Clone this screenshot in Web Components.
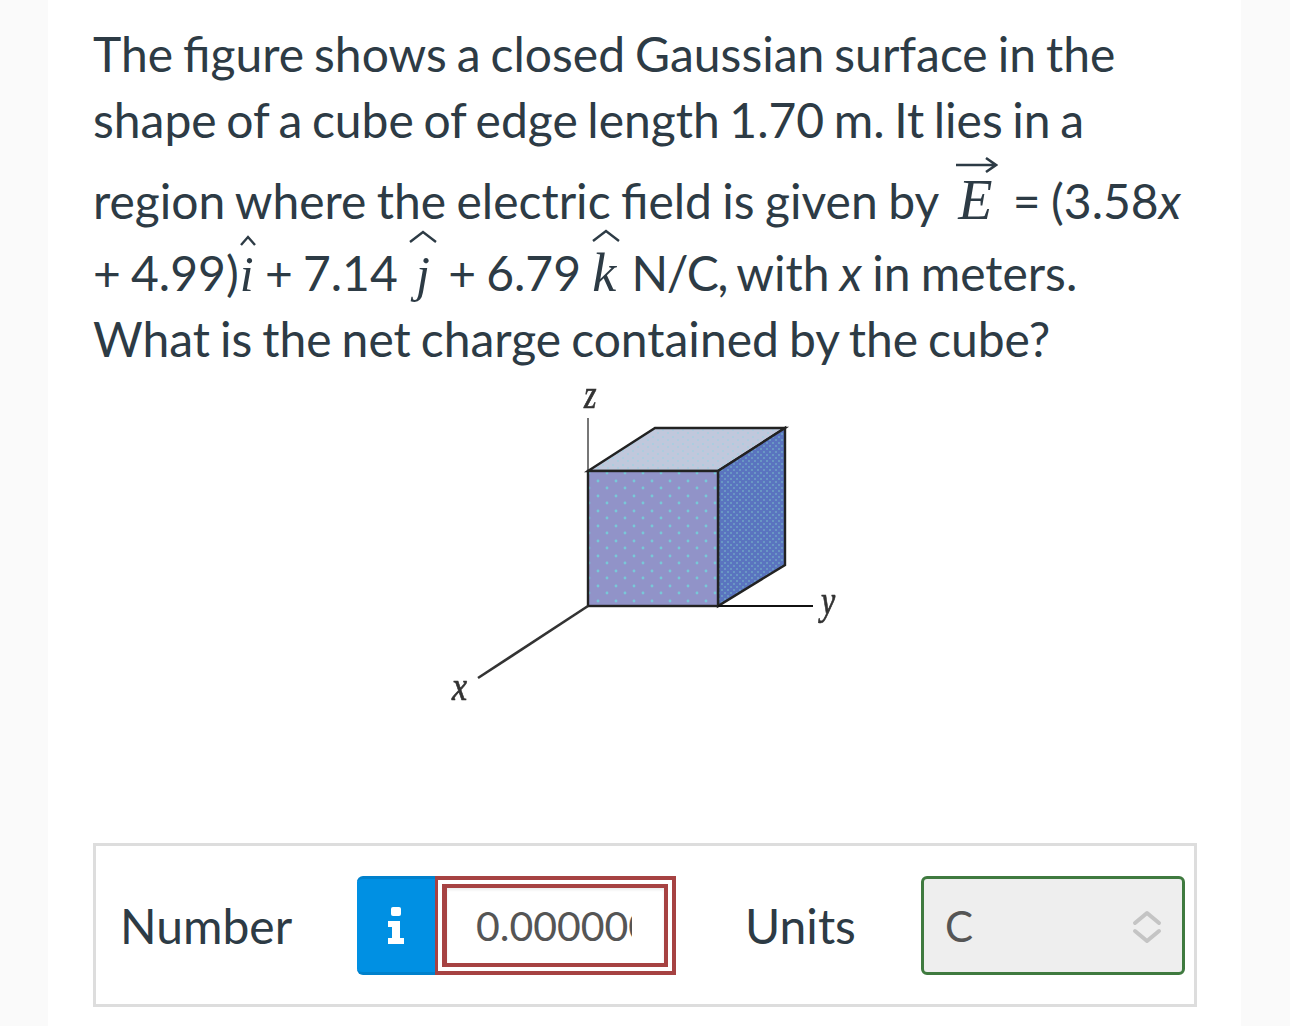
<!DOCTYPE html>
<html lang="en"><head><meta charset="utf-8"><title>Gaussian cube</title>
<style>html,body{margin:0;padding:0;background:#fafafa;height:100%;overflow:hidden}</style></head>
<body><q-page>
<q-text>
<q-line style="--h:66px;--ws:-2.3px">The figure shows a closed Gaussian surface in the</q-line>
<q-line style="--h:66px;--ws:-2.7px">shape of a cube of edge length 1.70 m. It lies in a</q-line>
<q-line style="--h:81px;--pt:14px;--ws:-1.9px">region where the electric field is given by <q-math mark="arrow" style="--w:54px;--fs:56px">E</q-math> = (3.58<em>x</em></q-line>
<q-line style="--h:72px;--pt:6px">+ 4.99)<q-math mark="hat" style="--w:16px">i</q-math> + 7.14 <q-math mark="hat" style="--w:30px">j</q-math> + 6.79 <q-math mark="hat" style="--w:30px;--fs:54px;--tx:-2px">k</q-math> <span style="letter-spacing:-1.3px">N/C,</span> with <em>x</em> in meters.</q-line>
<q-line style="--h:66px;--ws:-2.3px">What is the net charge contained by the cube?</q-line>
</q-text>
<q-figure></q-figure>
<q-answer></q-answer>
</q-page>
<script>
const def=(n,html)=>customElements.define(n,class extends HTMLElement{constructor(){super();this.attachShadow({mode:'open'}).innerHTML=html;}});
def('q-page',`<style>:host{display:block;width:1193px;height:1026px;margin-left:48px;background:#fff;overflow:hidden;box-sizing:border-box;padding:21px 45px 0 45px;color:#2d3b45;font-family:Lato,sans-serif}</style><slot></slot>`);
def('q-text',`<style>:host{display:block;font-size:48px}</style><slot></slot>`);
def('q-line',`<style>:host{display:block;box-sizing:border-box;height:var(--h);padding-top:var(--pt,0);line-height:66px;white-space:nowrap;word-spacing:var(--ws,-2.1px)}</style><slot></slot>`);
customElements.define('q-math',class extends HTMLElement{constructor(){super();this.attachShadow({mode:'open'});}
connectedCallback(){const m=this.getAttribute('mark');const t=this.textContent;
const mk=m==='arrow'?`<svg style="position:absolute;left:6px;top:-13px" width="44" height="22" viewBox="0 0 44 22"><path d="M2 11H42M32 4l10 7-10 7" fill="none" stroke="#2d3b45" stroke-width="2.6"/></svg>`:
t==='i'?`<svg style="position:absolute;left:0;top:-9px" width="18" height="16" viewBox="0 0 18 16"><path d="M2 13L9 5l7 8" fill="none" stroke="#2d3b45" stroke-width="2.4"/></svg>`:
`<svg style="position:absolute;left:1px;top:-13px" width="28" height="16" viewBox="0 0 28 16"><path d="M1 14L14 4l13 10" fill="none" stroke="#2d3b45" stroke-width="2.4"/></svg>`;
this.shadowRoot.innerHTML=`<style>:host{display:inline-block;position:relative;width:var(--w,44px);text-align:center;font-family:"Liberation Serif",serif;font-style:italic;font-size:var(--fs,50px);line-height:66px;word-spacing:0}span{position:relative;left:var(--tx,0)}</style>${mk}<span><slot></slot></span>`;}});
def('q-figure',`<style>:host{display:block;height:471px;position:relative}svg{position:absolute;left:357px;top:0;filter:blur(.7px)}text{font-family:"Liberation Serif",serif;font-style:italic;font-size:40px;fill:#333;stroke:#333;stroke-width:.7}</style>
<svg width="450" height="340" viewBox="0 0 450 340" role="img" aria-label="Cube on x y z axes">
<defs>
<pattern id="f" width="18" height="15" patternUnits="userSpaceOnUse"><rect width="18" height="15" fill="#9193c8"/><circle cx="4" cy="4" r="1.4" fill="#78c8d8"/><circle cx="13" cy="11" r="1.4" fill="#78c8d8"/></pattern>
<pattern id="r" width="6" height="6" patternUnits="userSpaceOnUse"><rect width="6" height="6" fill="#5a74bf"/><circle cx="2" cy="2" r="1" fill="#6ea3c6"/><circle cx="5" cy="5" r="1" fill="#6ea3c6"/></pattern>
<pattern id="t" width="10" height="7" patternUnits="userSpaceOnUse"><rect width="10" height="7" fill="#c0c8dc"/><circle cx="3" cy="2" r="1" fill="#a6cfe0"/><circle cx="8" cy="5" r="1" fill="#a6cfe0"/></pattern>
</defs>
<text transform="translate(134 36) scale(.8 1)">z</text>
<path d="M138 46V99" stroke="#777" stroke-width="2"/>
<path d="M138 99L205 56H335L268 99Z" fill="url(#t)" stroke="#222" stroke-width="2.4"/>
<path d="M268 99L335 56V193L268 234Z" fill="url(#r)" stroke="#222" stroke-width="2.4"/>
<rect x="138" y="99" width="130" height="135" fill="url(#f)" stroke="#222" stroke-width="2.4"/>
<path d="M268 234H363" stroke="#111" stroke-width="2.2"/>
<path d="M138 234L28 306" stroke="#333" stroke-width="2.6"/>
<text transform="translate(371 242) scale(.8 1)">y</text>
<text transform="translate(2 328) scale(.85 1)">x</text>
</svg>`);
def('q-answer',`<style>:host{display:flex;align-items:center;box-sizing:border-box;width:1104px;height:164px;border:3px solid #ddd;padding:0 9px 0 24px;font-size:48px}
.lbl{line-height:1;position:relative;top:1px}.num{width:237px}
.add{box-sizing:border-box;width:78px;height:99px;background:#0090e3;border-top:3px solid #0081cc;border-bottom:3px solid #0081cc;border-radius:6px 0 0 6px;display:flex;align-items:center;justify-content:center}
.inp{box-sizing:border-box;width:241px;height:99px;border:4px solid #a64242;border-left-width:3px;padding:4px;background:#fff}
.inn{box-sizing:border-box;height:100%;border:4px solid #a64242;border-width:4px 4px 4px 5px;padding:0 0 0 29px;display:flex;align-items:center;box-shadow:inset 0 2px 3px rgba(0,0,0,.08)}
.val{width:156px;overflow:hidden;white-space:nowrap;color:#555;font-size:41px;line-height:1.2;position:relative;top:1px}
.u{margin-left:69px;width:176px}
.sel{box-sizing:border-box;width:264px;height:99px;border:3px solid #3f7a3f;border-radius:6px;background:#eee;display:flex;align-items:center;justify-content:space-between;padding:0 20px 0 21px;color:#555;font-size:42px}
.sel span{position:relative;top:1px}
</style>
<span class="lbl num">Number</span>
<span class="add"><svg width="18" height="37" viewBox="0 0 18 37"><rect x="4" y="0" width="10" height="9" rx="2" fill="#fff"/><path d="M1 14H13V31H17V37H1V31H5V20H1Z" fill="#fff"/></svg></span>
<span class="inp"><span class="inn" style="display:flex"><span class="val">0.000000</span></span></span>
<span class="lbl u">Units</span>
<span class="sel"><span>C</span><svg width="30" height="34" viewBox="0 0 30 34" style="position:relative;top:2px"><path d="M3 13L15 3l12 10M3 21l12 10 12-10" fill="none" stroke="#c4c4c4" stroke-width="4" stroke-linecap="round" stroke-linejoin="round"/></svg></span>`);
</script></body></html>
